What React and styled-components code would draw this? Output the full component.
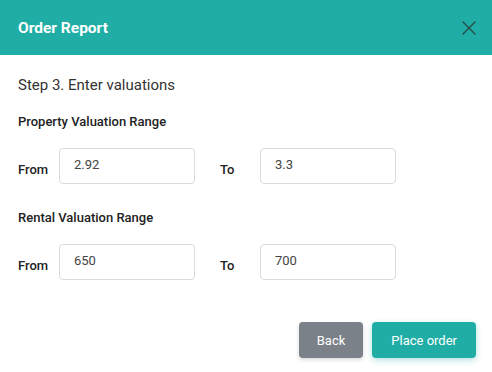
import React, { useState } from "react";
import styled, { createGlobalStyle } from "styled-components";

const GlobalStyle = createGlobalStyle`
    * { box-sizing: border-box; }
    body {
        margin: 0;
        background: #ffffff;
        font-family: Roboto, "Liberation Sans", sans-serif;
    }
`;

const Modal = styled.div`
    width: 492px;
    height: 372px;
    display: flex;
    flex-direction: column;
    background: white;
`;

const Header = styled.div`
    height: 55px;
    display: flex;
    align-items: center;
    justify-content: space-between;
    padding: 0 15px 0 18px;
    background: #1fada6;
`;

const Title = styled.div`
    color: white;
    font-size: 15.5px;
    font-weight: 700;
`;

const CloseButton = styled.button`
    border: none;
    outline: none;
    background: transparent;
    padding: 0;
    width: 16px;
    height: 16px;
    display: flex;
    align-items: center;
    justify-content: center;
    cursor: pointer;
`;

const Body = styled.div`
    flex: 1;
    display: flex;
    flex-direction: column;
    padding: 21px 18px 0 18px;
`;

const Step = styled.div`
    font-size: 15px;
    color: #333;
    line-height: 18px;
`;

const SectionTitle = styled.div`
    font-size: 13px;
    font-weight: 500;
    color: #222;
    line-height: 16px;
    margin-top: ${props => props.top}px;
`;

const Row = styled.div`
    display: flex;
    align-items: center;
    margin-top: 18px;
`;

const Label = styled.div`
    font-size: 13px;
    font-weight: 500;
    color: #222;
    width: ${props => props.width}px;
    padding-top: 7px;
`;

const Input = styled.input`
    width: 136px;
    height: 36px;
    border: 1px solid #dcdcdc;
    border-radius: 4px;
    padding: 0 14px;
    font-family: Roboto, "Liberation Sans", sans-serif;
    font-size: 13px;
    color: #444;
    outline: none;
    margin-right: 25px;
    padding-bottom: 3px;
`;

const Footer = styled.div`
    display: flex;
    justify-content: flex-end;
    gap: 9px;
    padding: 0 16px 14px 0;
`;

const Button = styled.button`
    height: 36px;
    padding: 0 ${props => props.pad}px;
    border: none;
    border-radius: 4px;
    font-family: Roboto, "Liberation Sans", sans-serif;
    font-size: 13px;
    color: white;
    background: ${props => props.primary ? '#1fada6' : '#7b8189'};
    box-shadow: ${props => props.primary ? '0 2px 6px rgba(31, 173, 166, 0.35)' : '0 2px 4px rgba(0, 0, 0, 0.15)'};
    cursor: pointer;
`;

function RangeRow({ from, to, onFrom, onTo }) {
    return (
        <Row>
            <Label width={41}>From</Label>
            <Input value={from} onChange={e => onFrom(e.target.value)} />
            <Label width={40}>To</Label>
            <Input value={to} onChange={e => onTo(e.target.value)} />
        </Row>
    );
}

export default function App() {
    const [property, setProperty] = useState({ from: '2.92', to: '3.3' });
    const [rental, setRental] = useState({ from: '650', to: '700' });

    return (
        <Modal>
            <GlobalStyle />
            <Header>
                <Title>Order Report</Title>
                <CloseButton>
                    <svg width="14" height="14" viewBox="0 0 14 14">
                        <path d="M1 1 L13 13 M13 1 L1 13" stroke="#2a4a48" strokeWidth="1.4" strokeLinecap="round" />
                    </svg>
                </CloseButton>
            </Header>
            <Body>
                <Step>Step 3. Enter valuations</Step>
                <SectionTitle top={20}>Property Valuation Range</SectionTitle>
                <RangeRow
                    from={property.from}
                    to={property.to}
                    onFrom={v => setProperty({ ...property, from: v })}
                    onTo={v => setProperty({ ...property, to: v })}
                />
                <SectionTitle top={26}>Rental Valuation Range</SectionTitle>
                <RangeRow
                    from={rental.from}
                    to={rental.to}
                    onFrom={v => setRental({ ...rental, from: v })}
                    onTo={v => setRental({ ...rental, to: v })}
                />
            </Body>
            <Footer>
                <Button pad={18}>Back</Button>
                <Button primary pad={19}>Place order</Button>
            </Footer>
        </Modal>
    );
}
